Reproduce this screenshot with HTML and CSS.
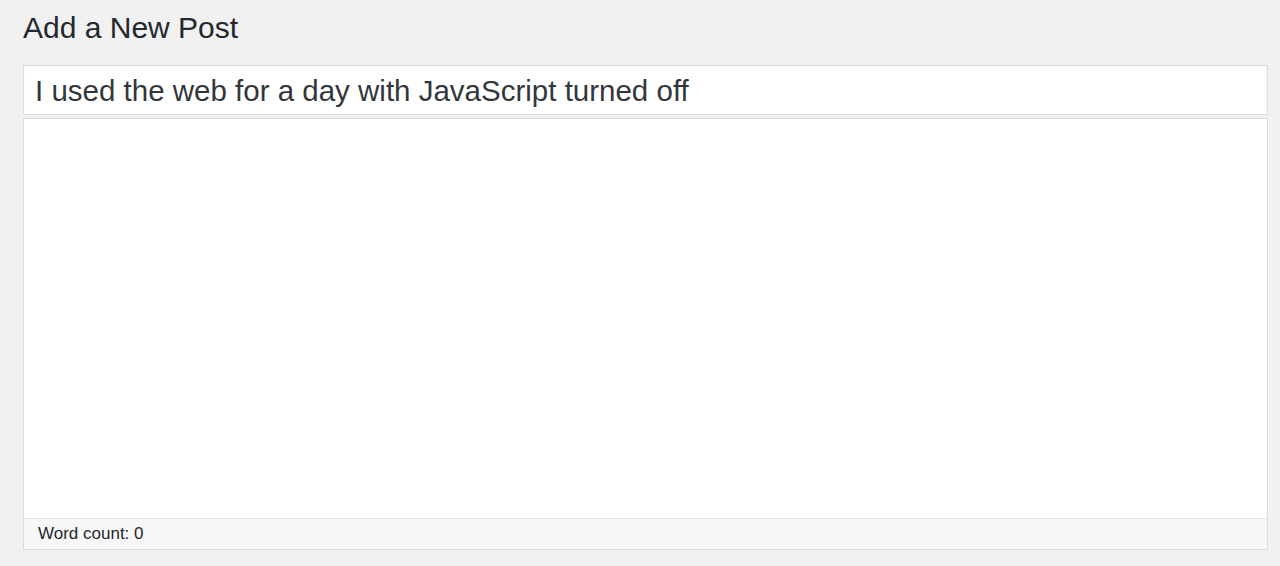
FILE: index.html
```html
<!DOCTYPE html>
<html>
<head>
<meta charset="utf-8">
<link rel="stylesheet" href="styles.css">
</head>
<body>
<div class="wrap">
  <h1 class="page-title">Add a New Post</h1>
  <div class="title-box">I used the web for a day with JavaScript turned off</div>
  <div class="editor">
    <div class="editor-body"></div>
    <div class="status-bar">Word count: 0</div>
  </div>
</div>
</body>
</html>
```

FILE: styles.css
```css
html, body {
  margin: 0;
  padding: 0;
  background: #f1f1f1;
}
body {
  font-family: "Liberation Sans", Arial, sans-serif;
  color: #23282d;
}
.wrap {
  padding: 9px 12px 0 23px;
  display: flex;
  flex-direction: column;
}
.page-title {
  margin: 0;
  font-size: 30px;
  font-weight: 400;
  line-height: 38px;
  height: 56px;
}
.title-box {
  height: 48px;
  border: 1px solid #dddddd;
  background: #fff;
  box-shadow: inset 0 1px 2px rgba(0,0,0,0.04);
  font-size: 29.5px;
  line-height: 50px;
  padding: 0 11px;
  color: #32373c;
}
.editor {
  margin-top: 3px;
  border: 1px solid #dddddd;
  background: #fff;
  display: flex;
  flex-direction: column;
  height: 430px;
}
.editor-body {
  flex: 1;
}
.status-bar {
  height: 30px;
  border-top: 1px solid #e5e5e5;
  background: #f7f7f7;
  font-size: 17px;
  line-height: 30px;
  padding: 0 14px;
  color: #23282d;
}
```
